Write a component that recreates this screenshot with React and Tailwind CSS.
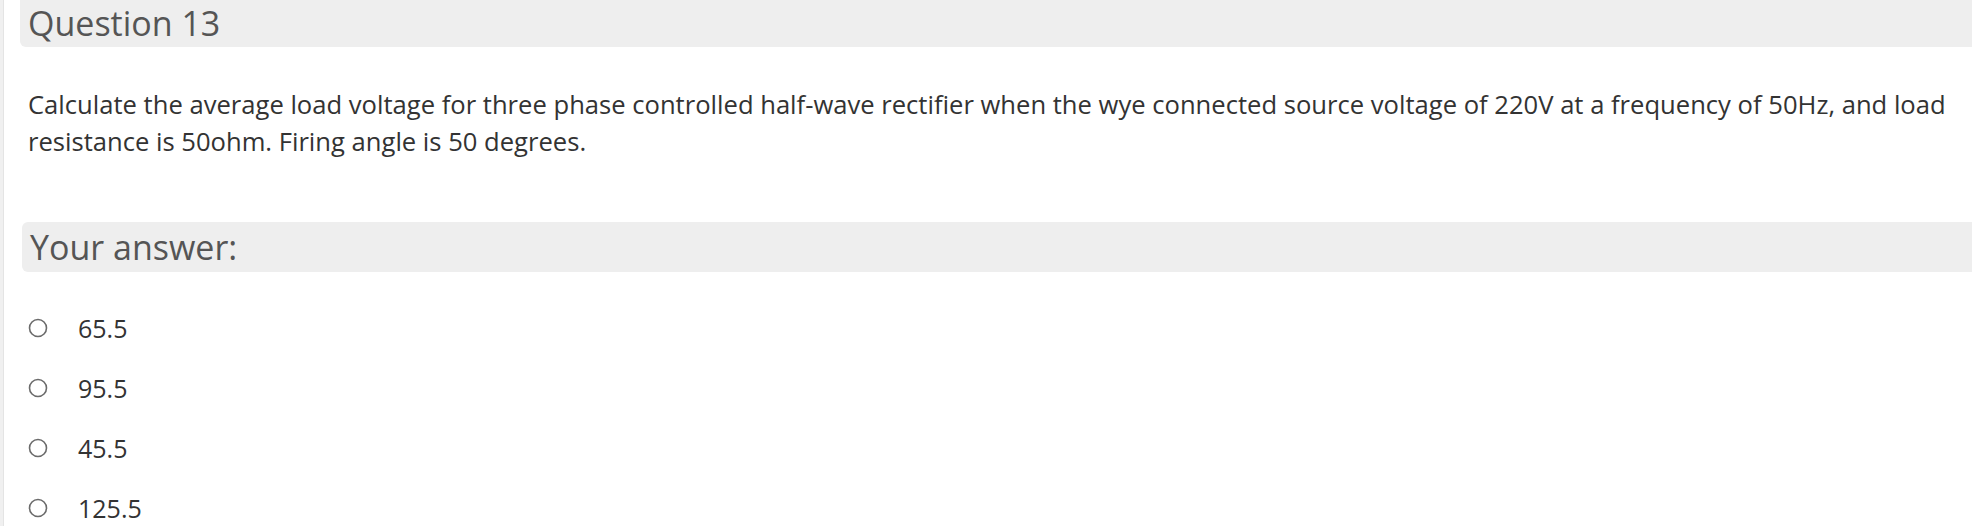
import React from "react"

const options = ["65.5", "95.5", "45.5", "125.5"]

export default function App() {
  return (
    <div className="flex min-h-[526px] bg-white" style={{ fontFamily: "'Open Sans', sans-serif" }}>
      {/* left rail */}
      <div className="w-[4px] shrink-0 bg-[#f0f0f0] border-r border-[#e4e4e4]" />

      <div className="flex-1 min-w-0">
        {/* Question header */}
        <div className="ml-[16px] h-[47px] rounded-bl-md bg-[#eeeeee] pl-[8px] pt-[3px]">
          <h2 className="text-[34px] leading-[40px] text-[#555] font-normal">Question 13</h2>
        </div>

        {/* Question text */}
        <p className="mt-[39px] ml-[24px] pr-[2px] text-[25.6px] leading-[37px] text-[#333]">
          Calculate the average load voltage for three phase controlled half-wave rectifier when the wye connected source voltage of 220V at a frequency of 50Hz, and load resistance is 50ohm. Firing angle is 50 degrees.
        </p>

        {/* Answer header */}
        <div className="mt-[62px] ml-[18px] h-[50px] rounded-l-md bg-[#eeeeee] pl-[8px]">
          <h3 className="text-[34px] leading-[50px] text-[#555] font-normal">Your answer:</h3>
        </div>

        {/* Options */}
        <div className="mt-[26px] ml-[24px] flex flex-col">
          {options.map((opt) => (
            <label key={opt} className="flex h-[60px] items-center">
              <svg width="20" height="20" viewBox="0 0 20 20" className="shrink-0">
                <circle cx="10" cy="10" r="8.5" fill="white" stroke="#6b6b6b" strokeWidth="1.6" />
              </svg>
              <span className="ml-[30px] text-[25px] leading-[36px] text-[#333]">{opt}</span>
            </label>
          ))}
        </div>
      </div>
    </div>
  )
}
